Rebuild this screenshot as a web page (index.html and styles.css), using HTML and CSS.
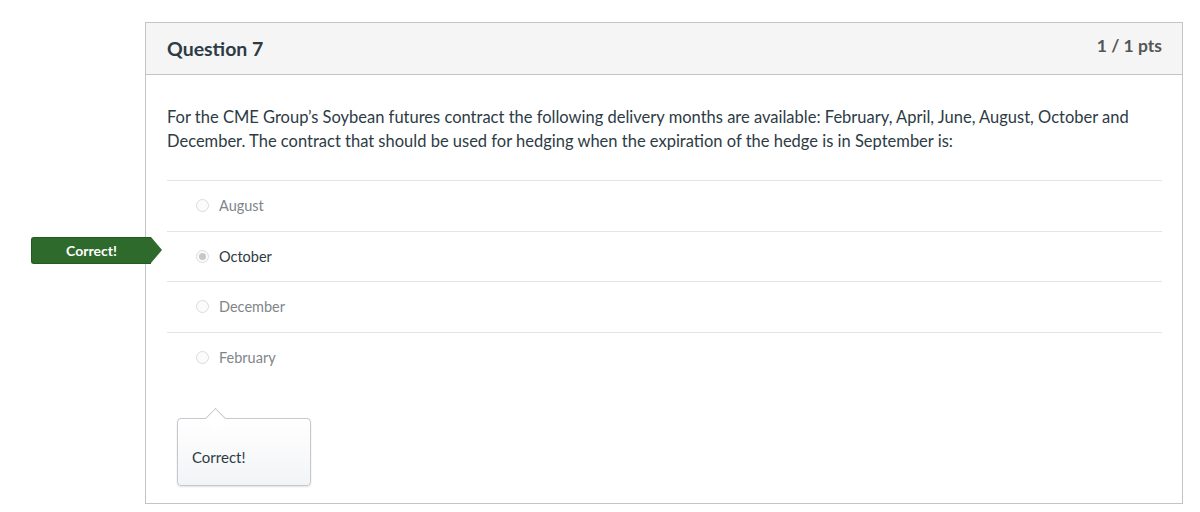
FILE: index.html
```html
<!DOCTYPE html>
<html>
<head>
<meta charset="utf-8">
<link rel="stylesheet" href="styles.css">
</head>
<body>
<div class="page">
  <div class="question">
    <div class="q-header">
      <span class="q-name">Question 7</span>
      <span class="q-pts">1 / 1 pts</span>
    </div>
    <div class="q-body">
      <p class="q-text">For the CME Group’s Soybean futures contract the following delivery months are available: February, April, June, August, October and December. The contract that should be used for hedging when the expiration of the hedge is in September is:</p>
      <div class="answers">
        <div class="answer"><span class="radio"></span><span class="label">August</span></div>
        <div class="answer selected">
          <span class="tag">Correct!</span>
          <span class="radio"></span><span class="label">October</span>
        </div>
        <div class="answer"><span class="radio"></span><span class="label">December</span></div>
        <div class="answer"><span class="radio"></span><span class="label">February</span></div>
      </div>
      <div class="comment">
        <span class="comment-arrow"></span>
        <span class="comment-text">Correct!</span>
      </div>
    </div>
  </div>
</div>
</body>
</html>
```

FILE: styles.css
```css
html, body {
  margin: 0;
  padding: 0;
  background: #fff;
}
body {
  font-family: Lato, "Open Sans", "Liberation Sans", sans-serif;
  color: #2d3b45;
}
.page {
  padding: 22px 0 0 145px;
}
.question {
  width: 1036px;
  border: 1px solid #c4c4c4;
}
.q-header {
  height: 51px;
  background: #f5f5f5;
  border-bottom: 1px solid #c4c4c4;
  display: flex;
  align-items: center;
  justify-content: space-between;
  padding: 0 20px 0 21px;
}
.q-name {
  font-size: 19.5px;
  font-weight: 700;
  color: #2d3b45;
}
.q-pts {
  font-size: 17.5px;
  font-weight: 700;
  color: #555;
  margin-top: -7px;
}
.q-body {
  padding: 30px 20px 17px 21px;
}
.q-text {
  margin: 0;
  font-size: 16.5px;
  line-height: 24px;
  color: #2d3b45;
}
.answers {
  margin-top: 27px;
}
.answer {
  position: relative;
  height: 49.6px;
  border-top: 1px solid #e4e4e4;
  display: flex;
  align-items: center;
  padding-left: 28px;
}
.radio {
  width: 11px;
  height: 11px;
  border: 1px solid #dcdcdc;
  border-radius: 50%;
  background: #fbfbfb;
  position: relative;
  margin-left: 1px;
}
.selected .radio::after {
  content: "";
  position: absolute;
  left: 2px;
  top: 2px;
  width: 7px;
  height: 7px;
  border-radius: 50%;
  background: #c8c8c8;
}
.label {
  margin-left: 10px;
  font-size: 14.5px;
  color: #80858a;
}
.selected .label {
  color: #2d3b45;
}
.tag {
  position: absolute;
  left: -136px;
  top: 5px;
  width: 120px;
  height: 27px;
  background: #2e6a2b;
  border: 1px solid #255a22;
  border-right: none;
  border-radius: 3px 0 0 3px;
  box-sizing: border-box;
  color: #fff;
  font-size: 14px;
  font-weight: 700;
  display: flex;
  align-items: center;
  justify-content: center;
}
.tag::after {
  content: "";
  position: absolute;
  right: -11px;
  top: -1px;
  border-left: 11px solid #2e6a2b;
  border-top: 13.5px solid transparent;
  border-bottom: 13.5px solid transparent;
}
.comment {
  position: relative;
  margin: 36px 0 0 10px;
  width: 134px;
  height: 68px;
  border: 1px solid #c3c9cf;
  border-radius: 4px;
  background: linear-gradient(#ffffff, #f3f4f6);
  box-shadow: 0 1px 2px rgba(0,0,0,0.12);
  display: flex;
  align-items: flex-end;
  padding: 0 0 19px 14px;
  box-sizing: border-box;
}
.comment-arrow {
  position: absolute;
  left: 30px;
  top: -8px;
  width: 14px;
  height: 14px;
  background: #fff;
  border-left: 1px solid #c3c9cf;
  border-top: 1px solid #c3c9cf;
  transform: rotate(45deg);
}
.comment-text {
  font-size: 15px;
  color: #2d3b45;
}
```
